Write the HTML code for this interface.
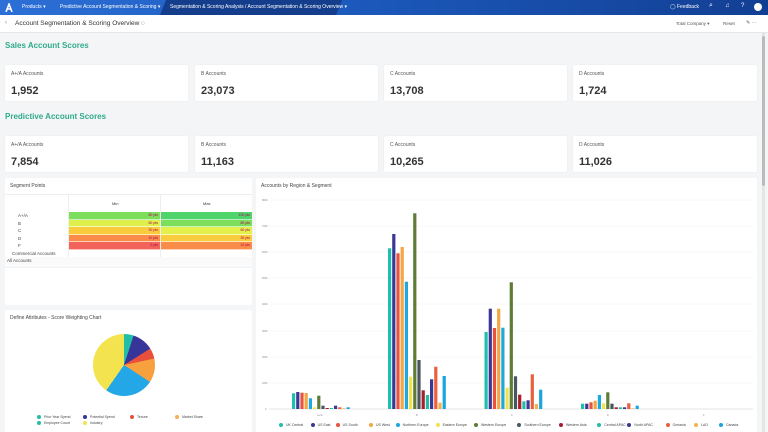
<!DOCTYPE html>
<html><head><meta charset="utf-8"><style>
*{margin:0;padding:0;box-sizing:border-box}
body{width:768px;height:432px;overflow:hidden;background:#f4f5f7;font-family:"Liberation Sans",sans-serif;position:relative;color:#333}
.top{position:absolute;left:0;top:0;width:768px;height:15px;background:linear-gradient(90deg,#2c6fd6,#1d5cc0 40%,#123f93);}
.top span{position:absolute;top:4px;font-size:5px;color:#fff}
.tab3{position:absolute;left:160px;top:0;width:182px;height:15px;background:#143e8c;clip-path:polygon(6px 0,100% 0,calc(100% - 6px) 100%,0 100%)}
.sub{position:absolute;left:0;top:15px;width:768px;height:18px;background:#fff;border-bottom:1px solid #e6e7ea}
.h{position:absolute;font-size:8px;color:#2faa8a;font-weight:bold}
.card{position:absolute;background:#fff;border-radius:2px;box-shadow:0 0 1px #ddd}
.card .l{position:absolute;left:6px;top:6px;font-size:5px;color:#555}
.card .v{position:absolute;left:6px;top:20px;font-size:11px;font-weight:bold;color:#333}
.panel{position:absolute;background:#fff;border-radius:2px}
.pt{position:absolute;left:5px;top:5px;font-size:5px;color:#444}
.row{position:absolute;left:0;height:7.5px;width:247px;font-size:4.5px;color:#444}
.c{position:absolute;height:7.5px;border-bottom:1px solid rgba(255,255,255,.6);font-size:3.5px;color:#a05;text-align:right;padding-right:2px;line-height:7px}
.lg{position:absolute;font-size:3.5px;color:#444}
.lg i{display:inline-block;width:4px;height:4px;border-radius:50%;margin-right:3px;vertical-align:middle}
</style></head><body>
<div class="top">
<svg style="position:absolute;left:5px;top:3px" width="8" height="9" viewBox="0 0 8 9"><path d="M1 9L4 1L7 9M2.5 6h3" stroke="#fff" stroke-width="1.6" fill="none"/></svg>
<span style="left:22px">Products ▾</span>
<span style="left:60px">Predictive Account Segmentation &amp; Scoring ▾</span>
<div class="tab3"></div>
<span style="left:170px">Segmentation &amp; Scoring Analysis / Account Segmentation &amp; Scoring Overview ▾</span>
<span style="left:670px">◯ Feedback</span>
<span style="left:709px;font-size:7px;top:2px">⌕</span>
<span style="left:725px;font-size:6px;top:3px">♫</span>
<span style="left:741px;font-size:6px;top:3px">?</span>
<div style="position:absolute;left:754px;top:3px;width:8px;height:8px;border-radius:50%;background:#fff"></div>
</div>
<div class="sub">
<span style="position:absolute;left:5px;top:5px;font-size:6px;color:#888">‹</span>
<span style="position:absolute;left:15px;top:5px;font-size:6.5px;color:#333">Account Segmentation &amp; Scoring Overview ◌</span>
<span style="position:absolute;left:676px;top:6px;font-size:4.5px;color:#555">Total Company ▾</span>
<span style="position:absolute;left:723px;top:6px;font-size:4.5px;color:#555">Reset</span>
<span style="position:absolute;left:746px;top:5px;font-size:5px;color:#555">✎ ⋯</span>
</div>
<div style="position:absolute;left:762px;top:33px;width:3px;height:399px;background:#e5e5e5"></div>
<div style="position:absolute;left:762px;top:36px;width:3px;height:150px;background:#bbb;border-radius:2px"></div>
<div class="h" style="left:5px;top:41px">Sales Account Scores</div>
<div class="card" style="left:5px;top:65px;width:183px;height:36px"><div class="l">A+/A Accounts</div><div class="v">1,952</div></div>
<div class="card" style="left:195px;top:65px;width:183px;height:36px"><div class="l">B Accounts</div><div class="v">23,073</div></div>
<div class="card" style="left:384px;top:65px;width:183px;height:36px"><div class="l">C Accounts</div><div class="v">13,708</div></div>
<div class="card" style="left:573px;top:65px;width:184px;height:36px"><div class="l">D Accounts</div><div class="v">1,724</div></div>
<div class="h" style="left:5px;top:112px">Predictive Account Scores</div>
<div class="card" style="left:5px;top:136px;width:183px;height:36px"><div class="l">A+/A Accounts</div><div class="v">7,854</div></div>
<div class="card" style="left:195px;top:136px;width:183px;height:36px"><div class="l">B Accounts</div><div class="v">11,163</div></div>
<div class="card" style="left:384px;top:136px;width:183px;height:36px"><div class="l">C Accounts</div><div class="v">10,265</div></div>
<div class="card" style="left:573px;top:136px;width:184px;height:36px"><div class="l">D Accounts</div><div class="v">11,026</div></div>

<div class="panel" style="left:5px;top:178px;width:247px;height:127px">
<div class="pt">Segment Points</div>
<div style="position:absolute;left:0;top:16px;width:247px;height:1px;background:#eee"></div>
<div style="position:absolute;left:63px;top:17px;width:1px;height:70px;background:#eee"></div>
<div style="position:absolute;left:155px;top:17px;width:1px;height:70px;background:#eee"></div>
<span style="position:absolute;left:107px;top:23px;font-size:4px">Min</span>
<span style="position:absolute;left:198px;top:23px;font-size:4px">Max</span>
<div style="position:absolute;left:0;top:86px;width:247px;height:1px;background:#ddd"></div>
<div class="row" style="top:34px"><span style="position:absolute;left:13px;top:1px">A+/A</span><div class="c" style="left:64px;width:91px;background:#7dde5c">80 pts</div><div class="c" style="left:156px;width:91px;background:#4fd46c">100 pts</div></div>
<div class="row" style="top:41.5px"><span style="position:absolute;left:13px;top:1px">B</span><div class="c" style="left:64px;width:91px;background:#dff04c">60 pts</div><div class="c" style="left:156px;width:91px;background:#7dde5c">80 pts</div></div>
<div class="row" style="top:49px"><span style="position:absolute;left:13px;top:1px">C</span><div class="c" style="left:64px;width:91px;background:#fbcb3e">30 pts</div><div class="c" style="left:156px;width:91px;background:#e3f04c">60 pts</div></div>
<div class="row" style="top:56.5px"><span style="position:absolute;left:13px;top:1px">D</span><div class="c" style="left:64px;width:91px;background:#fa8c4a">10 pts</div><div class="c" style="left:156px;width:91px;background:#fbcb3e">30 pts</div></div>
<div class="row" style="top:64px"><span style="position:absolute;left:13px;top:1px">F</span><div class="c" style="left:64px;width:91px;background:#f2635a">0 pts</div><div class="c" style="left:156px;width:91px;background:#fa8c4a">10 pts</div></div>
<div class="row" style="top:71.5px"><span style="position:absolute;left:7px;top:1px">Commercial Accounts</span></div>
<div class="row" style="top:79px;background:#fafafa"><span style="position:absolute;left:2px;top:1px">All Accounts</span></div>
<div style="position:absolute;left:0;top:88px;width:247px;height:2px;background:#f4f5f7"></div>
</div>

<div class="panel" style="left:5px;top:310px;width:247px;height:122px">
<div class="pt">Define Attributes - Score Weighting Chart</div>
<div style="position:absolute;left:88px;top:24px;width:62px;height:62px;border-radius:50%;background:conic-gradient(#22bfa8 0 18deg,#38359a 18deg 58deg,#e8503c 58deg 78deg,#f7a13e 78deg 123deg,#23a7e6 123deg 215deg,#f2e34f 215deg 360deg)"></div>
<div class="lg" style="left:32px;top:105px"><i style="background:#22bfa8"></i>Prior Year Spend</div>
<div class="lg" style="left:78px;top:105px"><i style="background:#38359a"></i>Potential Spend</div>
<div class="lg" style="left:125px;top:105px"><i style="background:#e8503c"></i>Tenure</div>
<div class="lg" style="left:170px;top:105px"><i style="background:#f7b04e"></i>Market Share</div>
<div class="lg" style="left:32px;top:111px"><i style="background:#22bfa8"></i>Employee Count</div>
<div class="lg" style="left:78px;top:111px"><i style="background:#f2e34f"></i>Industry</div>
</div>

<div class="panel" style="left:256px;top:178px;width:501px;height:254px">
<div class="pt">Accounts by Region &amp; Segment</div>
</div>
<svg style="position:absolute;left:0;top:0" width="768" height="432">
<g stroke="#f0f0f0" stroke-width="0.5">
<line x1="269" y1="200" x2="753" y2="200"/><line x1="269" y1="226" x2="753" y2="226"/><line x1="269" y1="252" x2="753" y2="252"/><line x1="269" y1="278" x2="753" y2="278"/><line x1="269" y1="304" x2="753" y2="304"/><line x1="269" y1="331" x2="753" y2="331"/><line x1="269" y1="357" x2="753" y2="357"/><line x1="269" y1="383" x2="753" y2="383"/></g>
<line x1="269" y1="409" x2="753" y2="409" stroke="#ccc" stroke-width="0.5"/>
<g font-size="2.5" fill="#888" font-family="Liberation Sans"><text x="262" y="201">8000</text><text x="262" y="227">7000</text><text x="262" y="253">6000</text><text x="262" y="279">5000</text><text x="262" y="305">4000</text><text x="262" y="332">3000</text><text x="262" y="358">2000</text><text x="262" y="384">1000</text><text x="265" y="410">0</text>
<text x="317" y="416">A+/A</text><text x="416" y="416">B</text><text x="511" y="416">C</text><text x="607" y="416">D</text><text x="703" y="416">F</text></g>
<g id="bars"></g>
</svg>
<div id="leg"></div>
<script>
var cols=["#1fbfae","#3a3796","#e8533e","#f5a542","#1fa7e0","#f0e44e","#5e7b38","#4a5661","#a51f2c","#25bcaa","#3a3796","#e8603c","#f3b14e","#1aa5dd"];
var names=["UK Central","US East","US South","US West","Northern Europe","Eastern Europe","Western Europe","Southern Europe","Western Asia","Central APAC","North APAC","Oceania","LAO","Canada"];
var tops=[[393.3,392,392.7,393,398.3,407.3,395.7,405.7,408,408,405.7,407.3,408.3,407.3],
[248.3,234,253.3,247,281.7,376.7,213.3,360,390.3,395,379.3,366.7,402.7,376],
[332,308.7,328,308.7,327.7,387.7,282.3,376.3,394.7,401.3,400.3,374.3,404,389.7],
[403.7,403.7,402.3,400.7,395,403.3,392.3,403.7,407.3,407.3,407.3,403.3,408.3,405.7]];
var starts=[292,388,484.5,581],s="";
tops.forEach(function(g,gi){g.forEach(function(t,i){s+='<rect x="'+(starts[gi]+i*4.2)+'" y="'+t+'" width="3.2" height="'+(409-t)+'" fill="'+cols[i]+'"/>';});});
document.getElementById("bars").innerHTML=s;
var xs=[75,170,245,345,425,545,660,790,915,1030,1120,1235,1320,1395],l="";
xs.forEach(function(x,i){l+='<div class="lg" style="left:'+(256+x/3-2)+'px;top:423px"><i style="background:'+cols[i]+'"></i>'+names[i]+'</div>';});
document.getElementById("leg").innerHTML=l;
</script>
</body></html>
